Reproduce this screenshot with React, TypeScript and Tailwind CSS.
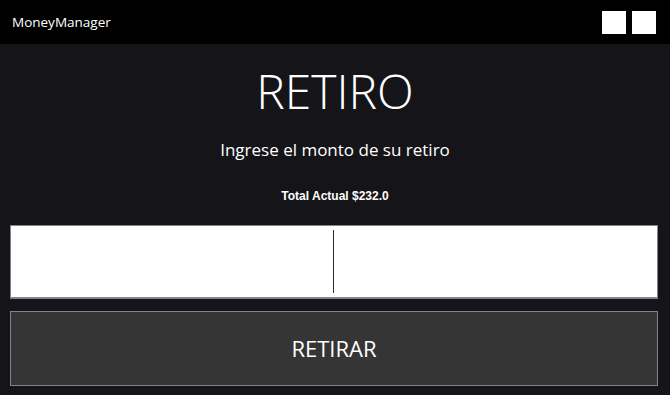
export default function App() {
  return (
    <div className="flex h-[395px] w-[670px] flex-col overflow-hidden bg-[#151519] font-['Open_Sans',sans-serif] text-white">
      <header className="flex h-[44px] shrink-0 items-center justify-between bg-black pl-[12px] pr-[14px]">
        <span className="text-[13.5px]">MoneyManager</span>
        <div className="flex gap-[6px]">
          <div className="h-[23px] w-[24px] bg-white" />
          <div className="h-[23px] w-[24px] bg-white" />
        </div>
      </header>

      <main className="flex flex-col">
        <h1 className="mt-[20px] h-[54px] text-center text-[48px] font-light leading-[54px]">
          RETIRO
        </h1>
        <p className="mt-[18px] h-[27px] text-center text-[17px] leading-[27px]">
          Ingrese el monto de su retiro
        </p>
        <p className="mt-[24px] h-[19px] text-center font-['Liberation_Sans',Arial,sans-serif] text-[12px] font-bold leading-[19px]">
          Total Actual $232.0
        </p>

        <div className="relative ml-[10px] mr-[12px] mt-[19px] h-[74px] border border-b-2 border-[#7d858d] bg-white">
          <span className="absolute left-[322px] top-[4px] h-[63px] w-px bg-[#2a2a2a]" />
        </div>

        <button
          type="button"
          className="ml-[10px] mr-[12px] mt-[12px] h-[75px] border border-[#7d858d] bg-[#353535] text-[22px] text-white"
        >
          RETIRAR
        </button>
      </main>
    </div>
  );
}
